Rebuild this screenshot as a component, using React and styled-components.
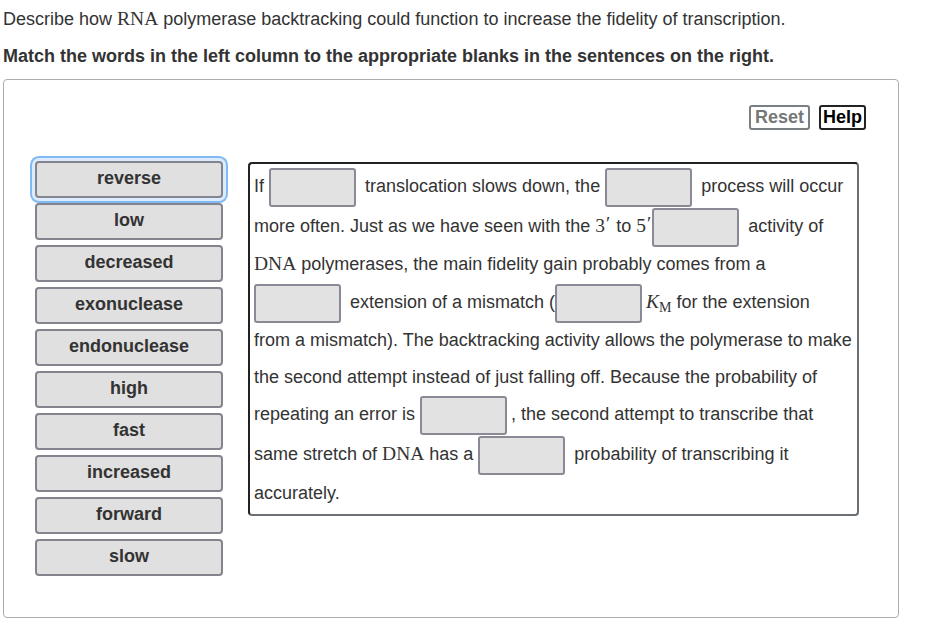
import React from "react";
import styled, { createGlobalStyle } from "styled-components";

const Global = createGlobalStyle`
  html, body { margin: 0; padding: 0; background: #fff; }
  body { font-family: "Liberation Sans", Arial, sans-serif; color: #333; }
`;

const Page = styled.div`
  padding: 8px 37px 0 3px;
  width: 936px;
  box-sizing: border-box;
`;

const Prompt = styled.p`
  margin: 0 0 16px;
  font-size: 18px;
  line-height: 21px;
  color: #333;
  font-weight: ${(p) => (p.$bold ? 700 : 400)};
  white-space: nowrap;
  &:last-of-type { margin-bottom: 12px; }
`;

const M = styled.span`
  font-family: "Liberation Serif", "Times New Roman", serif;
  font-size: 19.5px;
  font-style: ${(p) => (p.$italic ? "italic" : "normal")};
`;

const Prime = styled.span`
  display: inline-block;
  margin: 0 1px 0 1px;
  transform: translateY(-2px);
`;

const Sub = styled.sub`
  font-style: normal;
  font-size: 14px;
  vertical-align: -4px;
  line-height: 0;
`;

const Board = styled.div`
  border: 1px solid #acacac;
  border-radius: 4px;
  height: 539px;
  box-sizing: border-box;
  padding: 25px 32px 0 31px;
`;

const Toolbar = styled.div`
  display: flex;
  justify-content: flex-end;
  gap: 9px;
`;

const ToolButton = styled.button`
  font-family: "Liberation Sans", Arial, sans-serif;
  font-size: 18px;
  font-weight: 700;
  line-height: 21px;
  height: 25px;
  padding: 0 ${(p) => (p.$muted ? 4 : 2)}px;
  background: #fff;
  border: 2px solid ${(p) => (p.$muted ? "#7a7f83" : "#222")};
  color: ${(p) => (p.$muted ? "#777" : "#000")};
  border-radius: 3px;
  cursor: pointer;
`;

const Workspace = styled.div`
  display: flex;
  align-items: flex-start;
  gap: 25px;
  margin-top: 31px;
`;

const WordBank = styled.div`
  display: flex;
  flex-direction: column;
  gap: 5px;
  width: 188px;
`;

const Tile = styled.div`
  height: 37px;
  box-sizing: border-box;
  border: 2px solid #84848e;
  border-radius: 4px;
  background: #e0e0e0;
  color: #333;
  font-size: 18px;
  font-weight: 700;
  line-height: 31px;
  text-align: center;
  box-shadow: ${(p) =>
    p.$focused ? "0 0 0 3px #dcecfc, 0 0 0 5px #80b9f4" : "none"};
`;

const Passage = styled.div`
  width: 611px;
  margin-top: 1px;
  box-sizing: border-box;
  border: 2px solid;
  border-color: #222 #6b7077 #6b7077 #222;
  border-radius: 4px;
  padding: 2px 4px 2px 4px;
  font-size: 18px;
  color: #333;
`;

const Line = styled.div`
  height: ${(p) => p.$h}px;
  line-height: ${(p) => p.$h}px;
  white-space: nowrap;
`;

const Blank = styled.span`
  display: inline-block;
  vertical-align: middle;
  width: 87px;
  height: 39px;
  box-sizing: border-box;
  border: 2px solid #8a8a96;
  border-radius: 3px;
  background: #e2e2e2;
  margin-right: 4px;
`;

const words = [
  "reverse",
  "low",
  "decreased",
  "exonuclease",
  "endonuclease",
  "high",
  "fast",
  "increased",
  "forward",
  "slow",
];

export default function App() {
  return (
    <>
      <Global />
      <Page>
        <Prompt>
          Describe how <M>RNA</M> polymerase backtracking could function to
          increase the fidelity of transcription.
        </Prompt>
        <Prompt $bold>
          Match the words in the left column to the appropriate blanks in the
          sentences on the right.
        </Prompt>
        <Board>
          <Toolbar>
            <ToolButton $muted>Reset</ToolButton>
            <ToolButton>Help</ToolButton>
          </Toolbar>
          <Workspace>
            <WordBank>
              {words.map((w, i) => (
                <Tile key={w} $focused={i === 0}>
                  {w}
                </Tile>
              ))}
            </WordBank>
            <Passage>
              <Line $h={40}>
                If <Blank /> translocation slows down, the <Blank /> process
                will occur
              </Line>
              <Line $h={39}>
                more often. Just as we have seen with the{" "}
                <M>
                  3<Prime>′</Prime>
                </M>{" "}
                to{" "}
                <M>
                  5<Prime>′</Prime>
                </M>
                <Blank /> activity of
              </Line>
              <Line $h={38}>
                <M>DNA</M> polymerases, the main fidelity gain probably comes
                from a
              </Line>
              <Line $h={38}>
                <Blank /> extension of a mismatch (<Blank />
                <M $italic>
                  K<Sub>M</Sub>
                </M>{" "}
                for the extension
              </Line>
              <Line $h={38}>
                from a mismatch). The backtracking activity allows the
                polymerase to make
              </Line>
              <Line $h={36}>
                the second attempt instead of just falling off. Because the
                probability of
              </Line>
              <Line $h={39}>
                repeating an error is <Blank />, the second attempt to
                transcribe that
              </Line>
              <Line $h={40}>
                same stretch of <M>DNA</M> has a <Blank /> probability of
                transcribing it
              </Line>
              <Line $h={38}>accurately.</Line>
            </Passage>
          </Workspace>
        </Board>
      </Page>
    </>
  );
}
